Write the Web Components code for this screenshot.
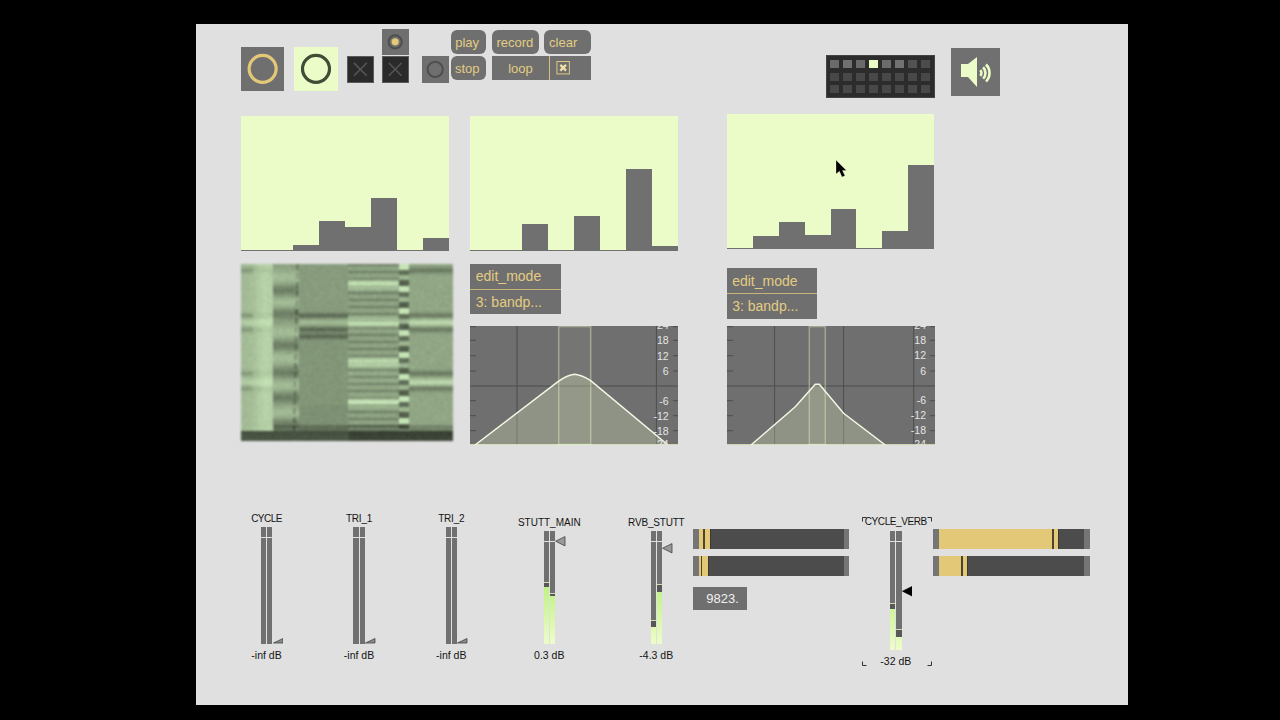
<!DOCTYPE html>
<html lang="en"><head><meta charset="utf-8"><title>Patch</title>
<style>
html,body{margin:0;height:720px;background:#000;overflow:hidden}
body{display:flex;align-items:flex-start;padding:24px 0 0 196px;box-sizing:border-box}
</style></head>
<body>
<max-patch>
  <max-ring x="241" y="47.3" w="43.3" h="43.7" bg="#6f6f6f" ring="#e3c878" r="13.5" sw="3.2"></max-ring>
  <max-ring x="294" y="47.3" w="44" h="43.7" bg="#ecfcc8" ring="#3f4d37" r="13.5" sw="3.2"></max-ring>
  <max-toggle x="347.3" y="56" w="26.7" h="26.7"></max-toggle>
  <max-toggle x="382.3" y="56" w="26.4" h="26.7"></max-toggle>
  <max-ring x="382.3" y="29" w="26.4" h="25.7" bg="#6f6f6f" ring="#4e4e4e" r="6.6" sw="2" dot="#e3c878"></max-ring>
  <max-ring x="422.3" y="56" w="26.4" h="26.7" bg="#6f6f6f" ring="#4e4e4e" r="7.6" sw="2"></max-ring>
  <max-button x="450.7" y="30.3" w="35" h="23.7" pr="2">play</max-button>
  <max-button x="450.7" y="56.3" w="35" h="23.7" pr="2">stop</max-button>
  <max-button x="492" y="30.3" w="46.7" h="23.7" pr="1">record</max-button>
  <max-button x="544.3" y="30.3" w="46.7" h="23.7" pr="9">clear</max-button>
  <max-loop x="492" y="56.3" w="99" h="23.7">loop</max-loop>
  <max-matrix x="825.7" y="55" w="109" h="43.3"></max-matrix>
  <max-speaker x="950.7" y="47.7" w="49" h="48.6"></max-speaker>

  <max-multi x="241" y="115.7" w="207.7" h="135" values="1,1,6,30,23.5,53,1,13"></max-multi>
  <max-multi x="470.3" y="115.7" w="208" h="135" values="1,1,27,1,35,1,82,5"></max-multi>
  <max-multi x="726.7" y="113.7" w="207.6" h="135" values="1,13,27,14,40,1,18,84"></max-multi>

  <max-spectro x="241" y="264" w="212" h="177"></max-spectro>

  <max-tab x="470.3" y="264" w="90.4" h="50"><span>edit_mode</span><span slot="b">3: bandp...</span></max-tab>
  <max-tab x="726.7" y="268.3" w="90.6" h="50.4"><span>edit_mode</span><span slot="b">3: bandp...</span></max-tab>

  <max-filter x="470.3" y="326" w="208" h="119" lines="47" band="88.7,120.7"
    curve="M5 119L88 55.7Q97 49 104.7 48.3Q112 49 120.7 54.7L198 119"></max-filter>
  <max-filter x="726.7" y="326" w="208.3" h="119" lines="47.6,116.6" band="82.3,98.3"
    curve="M24 119L68.3 80.7L88.3 58.3Q90 58 92.3 58.3L116.6 87.3L158.3 119"></max-filter>

  <max-meter x="226.5" y="513" w="80" bh="116.6" label="CYCLE" ls="-.55" db="-inf dB" mark="wedge"></max-meter>
  <max-meter x="319" y="513" w="80" bh="116.6" label="TRI_1" ls="-.2" db="-inf dB" mark="wedge"></max-meter>
  <max-meter x="411.3" y="513" w="80" bh="116.6" label="TRI_2" ls="-.2" db="-inf dB" mark="wedge"></max-meter>
  <max-meter x="509.3" y="516.7" w="80" bh="113.3" label="STUTT_MAIN" db="0.3 dB" left="50.7,55.7" right="61.7,65" mark="tri" my="5.5" mc="#999"></max-meter>
  <max-meter x="616.3" y="516.7" w="80" bh="113.3" label="RVB_STUTT" ls="-.2" db="-4.3 dB" left="89,95.7" right="53.3,60.7" mark="tri" my="12.5" mc="#999"></max-meter>
  <max-meter x="855.8" y="516.3" w="80" bh="119.7" label="CYCLE_VERB" ls="-.42" db="-32 dB" left="72.3,78" right="98,106" mark="tri" my="55.7" mc="#000"></max-meter>
  <max-brackets x="861.5" y="516.5" w="70" h="149"></max-brackets>

  <max-slider x="693.3" y="529" w="156" h="19.5" gold="11.7" line="4.3"></max-slider>
  <max-slider x="693.3" y="556" w="156" h="19.5" gold="10" line="1.7"></max-slider>
  <max-slider x="933.3" y="529" w="156.7" h="19.5" gold="120.6" line="113.6"></max-slider>
  <max-slider x="933.3" y="556" w="156.7" h="19.5" gold="29.6" line="22.3"></max-slider>
  <max-number x="693.3" y="586.7" w="54" h="23.6">9823.</max-number>

  <max-cursor x="835.7" y="159.7" w="11" h="18"></max-cursor>
</max-patch>
<script>
const OX=196,OY=24;
class Base extends HTMLElement{
  connectedCallback(){
    const g=n=>this.getAttribute(n);
    this.style.left=(+g('x')-OX)+'px';
    this.style.top=(+g('y')-OY)+'px';
    if(g('w'))this.style.width=g('w')+'px';
    if(g('h'))this.style.height=g('h')+'px';
    const s=this.attachShadow({mode:'open'});
    s.innerHTML='<style>:host{position:absolute;display:block;box-sizing:border-box}'+this.css()+'</style>'+this.html(g);
    this.ready&&this.ready(s);
  }
  css(){return ''} html(){return '<slot></slot>'}
}
customElements.define('max-patch',class extends HTMLElement{
  connectedCallback(){
    this.attachShadow({mode:'open'}).innerHTML=`<style>:host{display:block;position:relative;width:932px;height:681px;background:#e0e0e0;
      font-family:"Liberation Sans",Arial,sans-serif;filter:blur(.45px)}</style><slot></slot>`;
  }
});
customElements.define('max-ring',class extends Base{
  css(){return `:host{background:var(--b)} svg{display:block;width:100%;height:100%}`}
  html(g){
    this.style.setProperty('--b',g('bg'));
    const w=+g('w'),h=+g('h');
    return `<svg viewBox="0 0 ${w} ${h}"><circle cx="${w/2}" cy="${h/2}" r="${g('r')}" fill="none" stroke="${g('ring')}" stroke-width="${g('sw')}"/>${g('dot')?`<circle cx="${w/2}" cy="${h/2}" r="3.6" fill="${g('dot')}"/>`:''}</svg>`;
  }
});
customElements.define('max-toggle',class extends Base{
  css(){return `:host{background:#2a2a2a;border:1px solid #5a5a5a} svg{display:block;width:100%;height:100%}`}
  html(){return `<svg viewBox="0 0 25 25"><path d="M6 6L19 19M19 6L6 19" stroke="#555" stroke-width="1.6" fill="none"/></svg>`}
});
customElements.define('max-button',class extends Base{
  css(){return `:host{background:#6f6f6f;border-radius:6px;color:#e3cc82;font-size:13px;display:flex;align-items:center;justify-content:center;padding-right:var(--pr,0)}`}
  html(g){this.style.setProperty('--pr',(g('pr')||0)+'px');return '<slot></slot>'}
});
customElements.define('max-loop',class extends Base{
  css(){return `:host{background:#6f6f6f;color:#e3cc82;font-size:13px;display:flex}
   .a{width:58px;display:flex;align-items:center;justify-content:center;border-right:1.2px solid #d8c27e;box-sizing:border-box}
   .b{flex:1;display:flex;align-items:center;padding-left:6px}
   svg{display:block;width:14.3px;height:13.4px}`}
  html(){return `<div class="a"><slot></slot></div><div class="b"><svg viewBox="0 0 14 14"><rect x=".5" y=".5" width="13" height="13" fill="none" stroke="#e3cc82"/><path d="M4 4L10 10M10 4L4 10" stroke="#efe0a8" stroke-width="2.4"/></svg></div>`}
});
customElements.define('max-matrix',class extends Base{
  css(){return `:host{background:#2c2c2c;border:1px solid #444;padding:4px 3px;display:grid;grid-template-columns:repeat(8,9px);grid-auto-rows:8.3px;column-gap:4px;row-gap:4.3px}
    i{display:block}`}
  html(){
    const top=['#6a6a6a','#707070','#6a6a6a','#ecfcc8','#6c6c6c','#727272','#525252','#4c4c4c'];
    let c='';for(let i=0;i<24;i++)c+=`<i style="background:${i<8?top[i]:'#484848'}"></i>`;return c;
  }
});
customElements.define('max-speaker',class extends Base{
  css(){return `:host{background:#707070} svg{display:block;width:100%;height:100%}`}
  html(){return `<svg viewBox="0 0 49 48.6"><path d="M10 16H17L26 9V39L17 29H10Z" fill="#ecfcc8"/><g fill="none" stroke="#ecfcc8" stroke-width="2.6"><path d="M29.3 22.2A4 4 0 0 1 29.3 27.8"/><path d="M32.1 19.3A8 8 0 0 1 32.1 30.7"/><path d="M35 16.5A12 12 0 0 1 35 33.5"/></g></svg>`}
});
customElements.define('max-multi',class extends Base{
  css(){return `:host{background:#ecfcc8;display:flex;align-items:flex-end} i{flex:1;display:block;background:#707070}`}
  html(g){return g('values').split(',').map(v=>`<i style="height:${v}px"></i>`).join('')}
});
customElements.define('max-spectro',class extends Base{
  css(){return `canvas{display:block;width:100%;height:100%;filter:blur(.8px)}`}
  html(){return `<canvas width="212" height="177"></canvas>`}
  ready(s){
    const c=s.querySelector('canvas'),x=c.getContext('2d'),W=212,H=177,im=x.createImageData(W,H);
    let seed=12345;const rnd=()=>(seed=(seed*1664525+1013904223)>>>0)/4294967296;
    const gs=(v,m,w)=>Math.exp(-((v-m)*(v-m))/(2*w*w));
    const bump=(y,list,w,a)=>list.reduce((t,m)=>t+a*gs(y,m,w),0);
    for(let py=0;py<H;py++)for(let px=0;px<W;px++){
      let L;
      if(px<32){L=186+24*gs(px,25,8)+bump(py,[58,118],3,16)+bump(py,[51,65,109,124,6],2,-34)*(px<12?1:.3);}
      else if(px<58){L=160+bump(py,[13,38,68,94,121,149],5,28)+bump(py,[26,49,81,108,133,159],4,-36);
        if(Math.abs(px-56+py*.02)<1.2&&(py%9)<6)L-=36;}
      else if(px<107){L=150+(py<50?6:0)+bump(py,[51,65,72],1.8,-48)+bump(py,[58],2.4,36)+(py>140?-6:0);}
      else if(px<158){L=156+bump(py,[20,58,98,138],2.8,68)+((py%7)<2?-30:6)+bump(py,[112],10,6);}
      else if(px<168){const t=py%22;L=t<6?228:(t<11?110:(t<16?180:95));}
      else{L=166+bump(py,[58,118],2.6,50)+bump(py,[6,51,65,109,124],2,-46);}
      if(py>=167)L=70+(px>107?-8:8)+(py-167)*1.1;
      else if(py>=161&&px>32)L-=34;
      L+=(rnd()-.5)*22;
      L=Math.max(0,Math.min(255,L));
      const i=(py*W+px)*4;
      im.data[i]=L*.87;im.data[i+1]=L;im.data[i+2]=L*.8;im.data[i+3]=255;
    }
    x.putImageData(im,0,0);
  }
});
customElements.define('max-tab',class extends Base{
  css(){return `:host{background:#6f6f6f;color:#e3cc82;font-size:14px;display:flex;flex-direction:column}
   div{flex:1;display:flex;align-items:center;padding-left:5.5px}
   .t{border-bottom:1.5px solid #c9b478}`}
  html(){return `<div class="t"><slot></slot></div><div><slot name="b"></slot></div>`}
});
customElements.define('max-filter',class extends Base{
  css(){return `:host{background:#6f6f6f} svg{display:block;width:100%;height:100%;overflow:hidden}
    text{font-size:10.5px;fill:#e6e6e6;text-anchor:end}`}
  html(g){
    const w=+g('w'),h=119,[a,b]=g('band').split(',').map(Number),ax=w-21.6,lab=w-9.3;
    const ys=[.7,14.3,29.7,45,74.7,89.7,104.7],ls=[['24',-.8],['18',14.3],['12',29.7],['6',45],['-6',74.7],['-12',89.7],['-18',104.7],['-24',118]];
    return `<svg viewBox="0 0 ${w} ${h}">
      <g stroke="#4d4d4d" stroke-width="1">
      ${g('lines').split(',').map(v=>`<path d="M${v} 0V${h}"/>`).join('')}
      <path d="M${ax} 0V${h}"/><path d="M0 60H${w}"/>
      ${ys.map(y=>`<path d="M0 ${y}H6M${w-5} ${y}H${w}"/>`).join('')}
      </g>
      <rect x="${a}" y="0" width="${b-a}" height="${h}" fill="#ecfcc8" fill-opacity=".05"/>
      <path d="${g('curve')}Z" fill="#ecfcc8" fill-opacity=".26"/>
      <rect x="${a}" y=".5" width="${b-a}" height="${h-1}" fill="none" stroke="#ecfcc8" stroke-opacity=".38" stroke-width="1.5"/>
      <path d="${g('curve')}" fill="none" stroke="#f2f6e4" stroke-width="1.5"/>
      <path d="M0 118.5H${w}" stroke="#ecfcc8" stroke-opacity=".75"/>
      ${ls.map(([t,y])=>`<text x="${lab}" y="${y+3.8}">${t}</text>`).join('')}
    </svg>`;
  }
});
customElements.define('max-meter',class extends Base{
  css(){return `:host{display:flex;flex-direction:column;align-items:center;color:#141414;font-size:10.5px}
    .l{height:12px;line-height:12px;white-space:nowrap;margin-bottom:2.3px;font-size:10px}
    .r{position:relative;display:flex;gap:1px}
    .r i{display:block;width:5.3px;height:100%}
    .d{height:12px;line-height:12px;margin-top:4.7px;white-space:nowrap}
    svg{position:absolute;display:block}`}
  html(g){
    const bh=+g('bh');
    const bar=v=>{
      const G='linear-gradient(to top,#eefcca 0,#bff283 50%,#bff283 100%)';
      const [a,b]=v?v.split(',').map(Number):[bh,bh];
      const top=`linear-gradient(to bottom,#707070 0 10px,#e0e0e0 10px 11px,#707070 11px ${a}px,#d6d6b0 ${a}px ${a+1}px,#585858 ${a+1}px ${b}px,transparent ${b}px)`;
      return `<i style="background:${top},${G}"></i>`;
    };
    let mark='';
    if(g('mark')==='wedge')mark=`<svg style="left:calc(50% + 6px);bottom:0" width="10.5" height="5.5" viewBox="0 0 10.5 5.5"><path d="M.5 5L10 .5V5Z" fill="#8a8a8a" stroke="#3d4a3d" stroke-width=".8"/></svg>`;
    else mark=`<svg style="left:calc(50% + 6.2px);top:${+g('my')-.2}px" width="10.5" height="10.5" viewBox="0 0 10.5 10.5"><path d="M.6 5.2L10 .6V9.9Z" fill="${g('mc')}" stroke="${g('mc')==='#000'?'#000':'#444'}" stroke-width=".8"/></svg>`;
    return `<div class="l" style="letter-spacing:${g('ls')||0}px">${g('label')}</div><div class="r" style="height:${bh}px">${bar(g('left'))}${bar(g('right'))}${mark}</div><div class="d">${g('db')}</div>`;
  }
});
customElements.define('max-brackets',class extends Base{
  css(){return `svg{display:block;width:100%;height:100%}`}
  html(g){const w=+g('w'),h=+g('h');return `<svg viewBox="0 0 ${w} ${h}"><path d="M.5 4.5V.5H4.5M${w-4.5} .5H${w-.5}V4.5M.5 ${h-4.5}V${h-.5}H4.5M${w-4.5} ${h-.5}H${w-.5}V${h-4.5}" fill="none" stroke="#333" stroke-width="1"/></svg>`}
});
customElements.define('max-slider',class extends Base{
  css(){return `:host{display:flex;background:#4c4c4c}
    .c{width:5.6px;background:#757575;flex:none}
    .g{background:#e3c878;position:relative;flex:none;border-right:1px solid #3a3a30;box-sizing:border-box}
    .g b{position:absolute;top:0;bottom:0;width:1.4px;background:#4a4430}
    .m{flex:1}`}
  html(g){return `<div class="c"></div><div class="g" style="width:${g('gold')}px"><b style="left:${g('line')}px"></b></div><div class="m"></div><div class="c"></div>`}
});
customElements.define('max-number',class extends Base{
  css(){return `:host{background:#6f6f6f;color:#f0f0f0;font-size:13px;display:flex;align-items:center;padding-left:13px}`}
});
customElements.define('max-cursor',class extends Base{
  css(){return `svg{display:block;overflow:visible}`}
  html(){return `<svg width="11" height="18" viewBox="0 0 11 18"><path d="M0 0V14L3.4 11.2L6 17L9 15.8L6.5 10.4H10.5Z" fill="#000" stroke="#fff" stroke-opacity=".5" stroke-width=".6"/></svg>`}
});
</script>
</body></html>
